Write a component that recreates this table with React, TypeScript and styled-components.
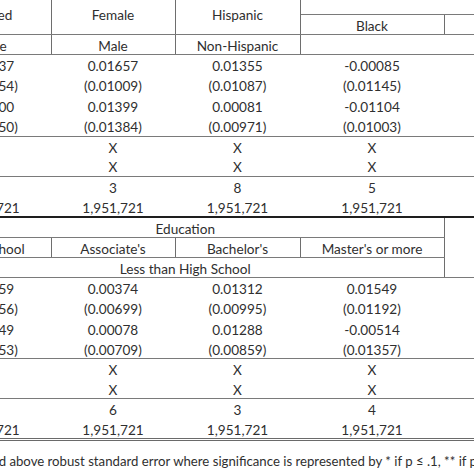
import * as React from 'react';
import styled, { createGlobalStyle, css } from 'styled-components';

const GlobalStyle = createGlobalStyle`
  html, body {
    margin: 0;
    padding: 0;
    background: #ffffff;
  }
  body {
    font-family: Lato, "Open Sans", sans-serif;
    color: #2f2f2f;
  }
`;

const Page = styled.div`
  width: 474px;
  height: 474px;
  overflow: hidden;
  background: #ffffff;
`;

const Table = styled.table`
  border-collapse: collapse;
  table-layout: fixed;
  width: 577px;
  margin: -6px 0 0 -73px;
  font-size: 13.6px;
`;

type RuleKind = 'none' | 'thin' | 'thick' | 'double';

const Row = styled.tr<{ $h: number; $rule?: RuleKind }>`
  height: ${(p) => p.$h}px;

  ${(p) =>
    p.$rule === 'thin' &&
    css`
      & > td {
        border-bottom: 1px solid #7a7a7a;
      }
    `}
  ${(p) =>
    p.$rule === 'thick' &&
    css`
      & > td {
        border-bottom: 2px solid #1e1e1e;
      }
    `}
  ${(p) =>
    p.$rule === 'double' &&
    css`
      & > td {
        border-bottom: 3px double #6a6a6a;
      }
    `}
`;

const Cell = styled.td<{ $right?: boolean; $under?: boolean }>`
  padding: 4px 2px 0;
  line-height: 15px;
  text-align: center;
  vertical-align: middle;
  white-space: nowrap;
  overflow: hidden;
  border-right: ${(p) => (p.$right ? '1px solid #6e6e6e' : 'none')};
  ${(p) =>
    p.$under &&
    css`
      border-bottom: 1px solid #7a7a7a;
    `}
`;

const Footnote = styled.div`
  margin-top: 10px;
  font-size: 13.2px;
  line-height: 20px;
  white-space: nowrap;
`;

const Hidden = styled.span`
  display: inline-block;
  margin-left: -152px;
`;

type DataRow = { cells: string[]; h: number; rule?: RuleKind };

const demographics: DataRow[] = [
  { cells: ['0.00137', '0.01657', '0.01355', '-0.00085', ''], h: 20.5 },
  { cells: ['(0.01054)', '(0.01009)', '(0.01087)', '(0.01145)', ''], h: 20.5 },
  { cells: ['0.00900', '0.01399', '0.00081', '-0.01104', ''], h: 20.5 },
  { cells: ['(0.01050)', '(0.01384)', '(0.00971)', '(0.01003)', ''], h: 20.5, rule: 'thin' },
  { cells: ['X', 'X', 'X', 'X', ''], h: 20 },
  { cells: ['X', 'X', 'X', 'X', ''], h: 20, rule: 'thin' },
  { cells: ['2', '3', '8', '5', ''], h: 20.5 },
  { cells: ['1,951,721', '1,951,721', '1,951,721', '1,951,721', ''], h: 20.5, rule: 'thick' },
];

const education: DataRow[] = [
  { cells: ['0.00959', '0.00374', '0.01312', '0.01549', ''], h: 20.25 },
  { cells: ['(0.00656)', '(0.00699)', '(0.00995)', '(0.01192)', ''], h: 20.25 },
  { cells: ['0.00549', '0.00078', '0.01288', '-0.00514', ''], h: 20.25 },
  { cells: ['(0.00653)', '(0.00709)', '(0.00859)', '(0.01357)', ''], h: 20.25, rule: 'thin' },
  { cells: ['X', 'X', 'X', 'X', ''], h: 20 },
  { cells: ['X', 'X', 'X', 'X', ''], h: 20, rule: 'thin' },
  { cells: ['2', '6', '3', '4', ''], h: 20 },
  { cells: ['1,951,721', '1,951,721', '1,951,721', '1,951,721', ''], h: 20, rule: 'double' },
];

const Rows: React.FC<{ rows: DataRow[]; prefix: string }> = ({ rows, prefix }) => (
  <>
    {rows.map((row, i) => (
      <Row key={`${prefix}-${i}`} $h={row.h} $rule={row.rule}>
        {row.cells.map((value, j) => (
          <Cell key={j}>{value}</Cell>
        ))}
      </Row>
    ))}
  </>
);

const App: React.FC = () => (
  <Page>
    <GlobalStyle />
    <Table>
      <colgroup>
        <col style={{ width: 124 }} />
        <col style={{ width: 124 }} />
        <col style={{ width: 125 }} />
        <col style={{ width: 144 }} />
        <col style={{ width: 60 }} />
      </colgroup>
      <tbody>
        <Row $h={20}>
          <Cell rowSpan={2} $right $under>Married</Cell>
          <Cell rowSpan={2} $right $under>Female</Cell>
          <Cell rowSpan={2} $right $under>Hispanic</Cell>
          <Cell colSpan={2} $under />
        </Row>
        <Row $h={20}>
          <Cell $right $under>Black</Cell>
          <Cell $under />
        </Row>
        <Row $h={20} $rule="thin">
          <Cell $right>Single</Cell>
          <Cell $right>Male</Cell>
          <Cell $right>Non-Hispanic</Cell>
          <Cell colSpan={2} />
        </Row>
        <Rows rows={demographics} prefix="demo" />

        <Row $h={18}>
          <Cell colSpan={4} $right $under>Education</Cell>
          <Cell rowSpan={3} $under />
        </Row>
        <Row $h={20}>
          <Cell $right $under>High School</Cell>
          <Cell $right $under>Associate's</Cell>
          <Cell $right $under>Bachelor's</Cell>
          <Cell $right $under>Master's or more</Cell>
        </Row>
        <Row $h={20}>
          <Cell colSpan={4} $right $under>Less than High School</Cell>
        </Row>
        <Rows rows={education} prefix="edu" />
      </tbody>
    </Table>
    <Footnote>
      <Hidden>Note: Coefficients reporte</Hidden>d above robust standard error where significance is
      represented by * if p ≤ .1, ** if p ≤ .05, *** if p ≤ .01
    </Footnote>
  </Page>
);

export default App;
